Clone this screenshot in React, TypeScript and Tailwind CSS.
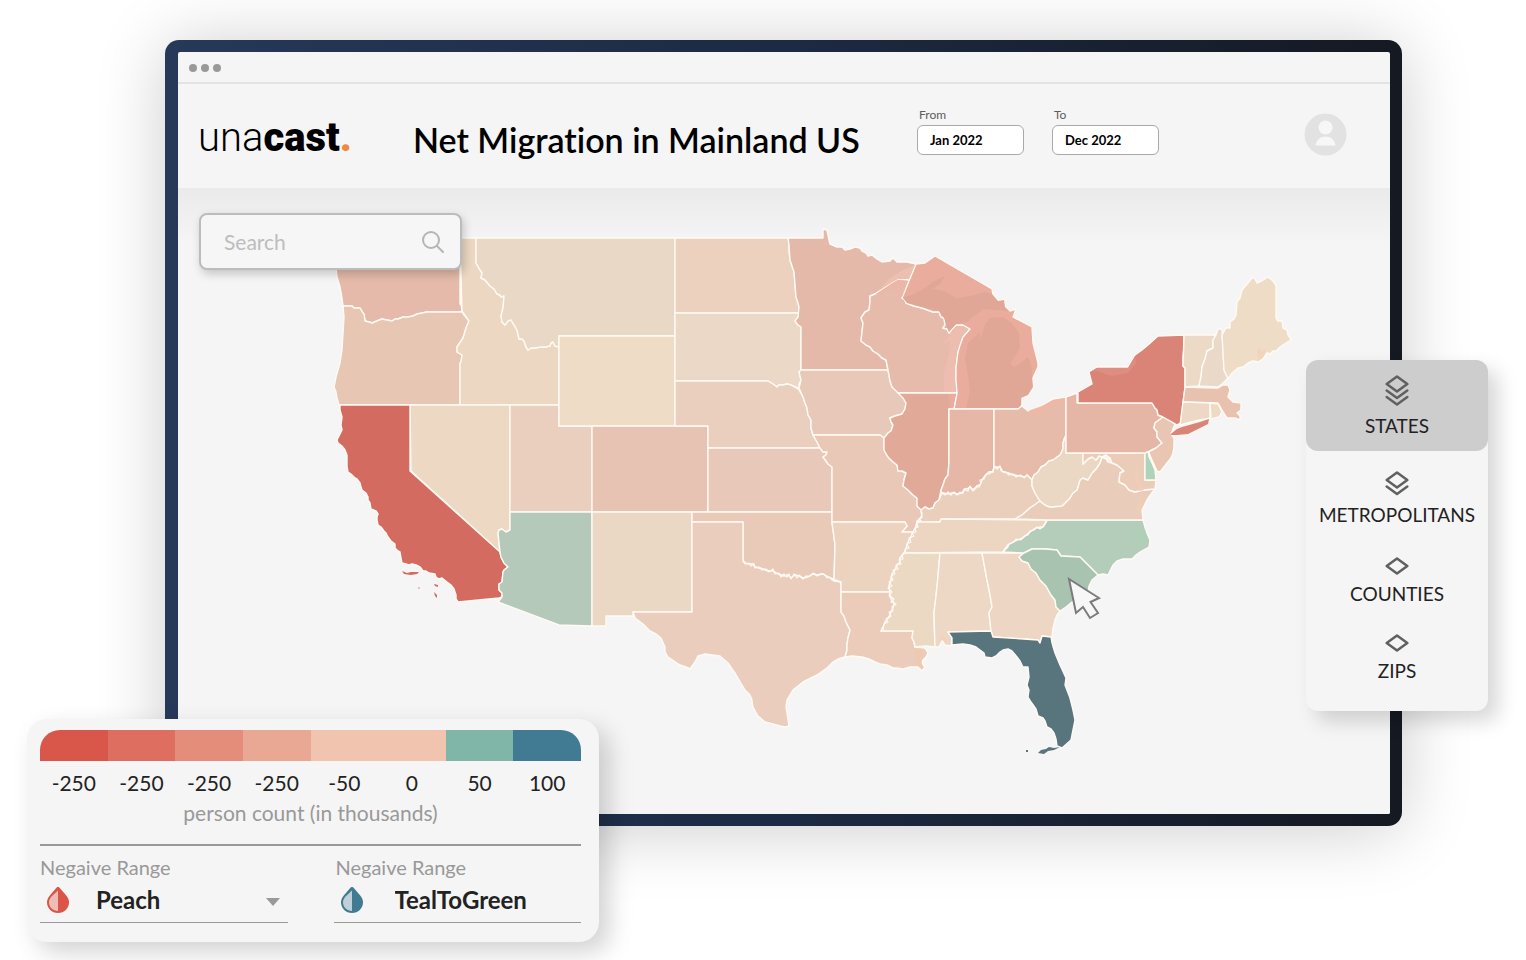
import React from "react";

type Region = { id: string; fill: string; points: string };

const REGIONS: Region[] = [
  { id: "WA", fill: "#e5baaa", points: "334,240 460,238 460,304 461,305 462,311 460,312 427,312 422,313 417,314 413,316 408,317 403,317 398,319 395,319 392,321 387,320 382,319 377,321 372,323 369,322 365,321 364,314 363,313 360,308 354,308 352,306 343,306 342,298 340,287 337,277 336,268" },
  { id: "OR", fill: "#e7c6b4", points: "343,306 352,306 354,308 360,308 363,313 364,314 365,321 369,322 372,323 377,321 382,319 387,320 392,321 395,319 398,319 403,317 408,317 413,316 417,314 422,313 427,312 462,312 464,315 469,321 466,328 463,338 459,344 457,347 457,352 462,355 461,362 460,363 460,405 339,405 337,398 336,392 334,387 336,377 340,363 342,350 343,333 344,317" },
  { id: "ID", fill: "#ebd7c2", points: "460,238 476,238 476,263 480,270 482,273 481,278 485,280 490,286 494,289 497,294 500,295 501,297 504,296 503,308 501,316 502,322 505,325 508,321 511,320 514,325 517,330 519,339 522,339 524,341 526,347 528,350 531,348 535,348 541,347 545,347 550,346 551,343 553,342 555,346 559,347 559,405 460,405 460,363 461,362 462,355 457,352 457,347 459,344 463,338 466,328 469,321 462,311" },
  { id: "MT", fill: "#ead8c6", points: "476,238 675,238 675,336 559,336 559,347 555,346 553,342 551,343 550,346 545,347 541,347 535,348 531,348 528,350 526,347 524,341 522,339 519,339 517,330 514,325 511,320 508,321 505,325 502,322 501,316 503,308 504,296 501,297 500,295 497,294 494,289 490,286 485,280 481,278 482,273 480,270 476,263" },
  { id: "NV", fill: "#ecd8c3", points: "410,405 510,405 510,530 508,531 506,532 502,529 499,530 498,533 500,552 411,471" },
  { id: "UT", fill: "#eacfbf", points: "510,405 559,405 559,426 592,426 592,512 510,512" },
  { id: "WY", fill: "#eedcc6", points: "559,336 675,336 675,426 559,426" },
  { id: "CO", fill: "#e7c3b4", points: "592,426 708,426 708,512 592,512" },
  { id: "CA", fill: "#d46b60", points: "340,405 410,405 410,471 500,552 501,557 504,563 508,567 504,570 503,572 502,582 499,584 499,590 502,593 502,597 499,598 458,602 456,599 456,595 455,592 454,589 451,585 447,582 442,578 439,579 437,578 436,577 435,574 429,573 426,571 423,571 421,568 420,567 416,565 412,564 409,565 406,564 402,563 401,558 400,552 398,551 396,549 395,548 395,544 391,541 388,537 386,533 384,531 381,527 378,525 377,520 377,517 378,514 376,511 371,509 370,503 368,500 368,497 366,493 362,490 361,487 360,483 357,479 355,478 351,474 348,472 347,466 347,460 347,455 345,450 342,446 338,443 337,440 340,434 342,430 341,425 342,417 340,410" },
  { id: "AZ", fill: "#b4c9b9", points: "510,512 592,512 592,626 559,625 498,602 502,597 502,593 499,590 499,584 502,582 503,572 504,570 508,567 504,563 501,557 500,552 498,533 499,530 502,529 506,532 508,531 510,530" },
  { id: "NM", fill: "#ead8c5", points: "592,512 692,512 692,612 633,612 633,616 606,616 606,626 592,626" },
  { id: "ND", fill: "#ecd1be", points: "675,238 788,238 789,245 789,252 790,260 792,266 794,272 795,284 796,297 798,303 799,307 799,313 675,313" },
  { id: "SD", fill: "#ecd8c7", points: "675,313 799,313 798,317 795,321 798,325 801,327 801,370 799,372 801,380 799,384 799,388 795,387 791,385 787,384 783,385 779,385 777,387 773,384 768,381 675,381" },
  { id: "NE", fill: "#eacfbf", points: "675,381 768,381 773,384 777,387 779,385 783,385 787,384 791,385 795,387 799,390 803,397 805,403 807,408 808,415 811,420 811,428 813,435 817,442 820,448 708,448 708,426 675,426" },
  { id: "KS", fill: "#e8c8b8", points: "708,448 820,448 823,452 827,452 826,455 823,457 826,461 828,464 832,467 832,512 708,512" },
  { id: "OK", fill: "#e9cab9", points: "692,512 832,512 832,523 835,545 834,579 830,578 823,574 818,575 813,574 808,577 803,578 799,576 795,575 791,578 788,575 784,576 778,574 773,571 768,571 763,569 759,568 755,567 753,564 747,564 743,561 743,522 692,522" },
  { id: "TX", fill: "#ebcdbd", points: "692,522 743,522 743,561 747,564 753,564 755,567 759,568 763,569 768,571 773,571 778,574 784,576 788,575 791,578 795,575 799,576 803,578 808,577 813,574 818,575 823,574 830,578 834,581 841,582 841,612 844,616 846,622 850,630 848,638 847,644 847,650 845,657 838,659 833,662 827,668 817,675 803,682 793,690 787,700 786,707 787,713 789,726 785,727 780,726 773,724 765,722 758,716 753,707 752,700 750,695 745,690 742,685 739,680 735,673 732,669 728,663 720,656 712,655 705,654 698,656 695,662 690,669 686,667 680,665 674,661 668,657 665,652 665,647 661,638 656,634 650,631 643,624 635,618 633,612 692,612" },
  { id: "MN", fill: "#e5b9a9", points: "788,238 823,238 823,229 827,230 829,240 830,244 837,247 842,247 845,250 850,249 855,247 860,248 862,251 866,253 868,256 872,255 877,259 882,262 890,261 893,258 897,262 907,262 916,264 909,280 898,279 891,283 875,294 870,296 870,302 869,310 865,312 861,318 863,323 862,332 861,341 866,345 870,347 873,351 878,354 882,358 886,360 888,370 801,370 801,327 798,325 795,321 798,317 799,307 798,303 796,297 795,284 794,272 792,266 790,260 789,245" },
  { id: "IA", fill: "#e8c9b9", points: "801,370 888,370 889,375 890,381 892,387 898,392 903,398 906,403 905,409 902,414 895,416 890,418 891,422 893,425 891,431 888,433 884,438 880,435 813,435 811,428 811,420 808,415 807,408 805,403 803,397 799,388 801,380 799,372" },
  { id: "MO", fill: "#e9c8b8", points: "813,435 880,435 884,438 884,444 884,450 888,457 892,461 897,465 898,471 902,471 906,473 904,480 903,486 908,490 913,495 917,498 917,506 921,510 922,517 917,521 916,527 913,532 902,532 907,526 905,522 832,522 832,467 828,464 826,461 823,457 826,455 827,452 823,452 820,448 817,442" },
  { id: "AR", fill: "#ecd3c0", points: "832,522 905,522 907,526 902,532 913,532 911,537 909,540 907,545 906,549 904,553 900,558 900,562 897,565 895,570 892,574 891,580 889,586 890,592 841,592 841,582 834,580 835,545" },
  { id: "LA", fill: "#ebccba", points: "841,592 890,592 890,597 894,603 893,608 891,612 889,617 885,622 883,627 881,631 913,631 912,638 914,642 915,647 925,648 928,653 926,657 923,660 922,664 925,667 922,671 918,667 910,667 903,669 897,668 893,668 887,665 880,664 875,662 869,659 862,657 852,656 845,657 847,650 847,644 848,638 850,630 846,622 844,616 841,612" },
  { id: "WI", fill: "#e6bbab", points: "909,280 902,298 905,300 906,303 914,306 922,308 933,312 939,312 941,317 944,318 945,325 943,328 947,329 949,333 952,329 956,325 963,325 970,329 963,337 960,345 958,352 956,367 956,380 957,393 898,393 892,387 890,381 889,375 888,370 886,360 882,358 878,354 873,351 870,347 866,345 861,341 862,332 863,323 861,318 865,312 869,310 870,302 870,296 875,294 891,283 898,279" },
  { id: "IL", fill: "#e0a998", points: "898,393 957,393 954,409 949,409 949,462 948,475 945,479 943,485 941,490 940,495 939,500 935,503 933,508 929,509 925,507 921,510 917,506 917,498 913,495 908,490 903,486 904,480 906,473 902,471 898,471 897,465 892,461 888,457 884,450 884,438 888,433 891,431 893,425 891,422 890,418 895,416 902,414 905,409 906,403 903,398" },
  { id: "MI", fill: "#e9ac9d", points: "916,264 925,263 935,256 992,289 993,295 998,301 1004,300 1005,307 1010,311 1016,309 1013,317 1032,327 1033,343 1038,363 1038,367 1032,380 1033,387 1028,395 1022,398 1022,405 1018,409 954,409 957,393 956,380 956,367 958,352 960,345 963,337 970,329 963,325 956,325 952,329 949,333 947,329 943,328 945,325 944,318 941,317 939,312 933,312 922,308 914,306 906,303 905,300 902,298" },
  { id: "IN", fill: "#e6b7a7", points: "949,409 994,409 994,467 993,472 989,472 985,476 982,480 980,485 977,486 973,490 970,487 967,489 965,489 962,493 958,494 953,493 948,494 942,493 941,490 943,485 945,479 948,475 949,462" },
  { id: "OH", fill: "#e7bba9", points: "994,409 1018,409 1022,406 1028,411 1033,411 1042,406 1053,399 1066,397 1066,435 1064,439 1063,443 1063,449 1060,455 1053,460 1049,461 1045,465 1041,467 1038,472 1034,475 1032,480 1027,475 1025,477 1020,476 1013,475 1008,473 1003,472 1000,467 997,468 994,467" },
  { id: "KY", fill: "#eacfbd", points: "942,493 948,494 953,493 958,494 962,493 965,489 967,489 970,487 973,490 977,486 980,485 982,480 985,476 989,472 993,472 994,467 1000,467 1003,472 1008,473 1013,475 1020,476 1025,477 1027,475 1032,480 1032,486 1035,493 1040,501 1035,505 1030,508 1022,515 1015,519 941,519 940,522 917,522 922,517 921,510 925,507 929,509 933,508 935,503 939,500" },
  { id: "TN", fill: "#ecd5c1", points: "917,522 940,522 941,519 1047,520 1043,527 1036,528 1030,532 1023,538 1015,541 1008,545 1003,552 904,553 906,549 907,545 909,540 911,537 913,532 916,527" },
  { id: "MS", fill: "#ecd9c4", points: "904,553 940,553 937,587 934,613 935,647 925,646 915,647 914,642 912,638 913,631 881,631 883,627 885,622 889,617 891,612 893,608 894,603 890,597 890,592 889,586 891,580 892,574 895,570 897,565 900,562 900,558" },
  { id: "AL", fill: "#ecd8c4", points: "940,553 982,553 987,580 990,595 992,607 989,613 990,622 991,631 948,632 952,638 951,646 945,645 942,640 939,647 935,647 934,613 937,587" },
  { id: "GA", fill: "#edd6c3", points: "982,553 1024,553 1019,557 1022,561 1028,563 1031,569 1036,573 1040,580 1046,586 1051,595 1055,600 1056,607 1060,611 1057,615 1055,620 1053,628 1052,637 1042,636 1040,643 1038,640 993,637 991,631 990,622 989,613 992,607 990,595 987,580" },
  { id: "FL", fill: "#58747c", points: "948,632 991,631 993,637 1038,640 1040,643 1042,636 1051,637 1052,643 1055,653 1060,665 1066,678 1065,685 1070,698 1073,710 1075,720 1073,730 1071,740 1062,748 1057,746 1056,739 1054,733 1051,729 1047,727 1045,721 1043,718 1038,716 1036,709 1031,702 1028,697 1029,690 1027,685 1029,677 1028,667 1023,667 1020,661 1017,657 1012,651 1008,649 1003,650 1000,652 996,656 992,658 985,657 984,653 980,650 976,647 970,645 963,644 952,645 952,638" },
  { id: "NC", fill: "#b4ccba", points: "1047,520 1143,520 1146,531 1150,540 1149,547 1140,552 1136,555 1132,559 1123,559 1117,561 1113,565 1110,571 1108,575 1103,574 1098,575 1080,557 1061,556 1057,550 1045,549 1032,549 1024,553 1003,552 1008,545 1015,541 1023,538 1030,532 1036,528 1043,527" },
  { id: "SC", fill: "#a9c3b1", points: "1019,557 1024,553 1032,549 1045,549 1057,550 1061,556 1080,557 1098,575 1092,580 1089,586 1088,592 1079,597 1072,602 1066,607 1060,611 1056,607 1055,600 1051,595 1046,586 1040,580 1036,573 1031,569 1028,563 1022,561" },
  { id: "VA", fill: "#e9ccba", points: "1015,519 1022,515 1030,508 1040,501 1045,505 1050,507 1062,506 1066,502 1070,498 1073,493 1077,490 1080,480 1083,478 1088,480 1092,473 1096,469 1100,463 1102,457 1106,459 1108,462 1112,463 1117,465 1124,471 1120,473 1119,482 1125,485 1129,490 1135,492 1143,490 1155,489 1151,494 1147,500 1142,510 1143,520 1047,520" },
  { id: "WV", fill: "#ead8c4", points: "1066,435 1066,453 1083,453 1083,464 1088,459 1092,457 1096,460 1099,456 1102,457 1100,463 1096,469 1092,473 1088,480 1083,478 1080,480 1077,490 1073,493 1070,498 1066,502 1062,506 1050,507 1045,505 1040,501 1035,493 1032,486 1032,480 1034,475 1038,472 1041,467 1045,465 1049,461 1053,460 1060,455 1063,449 1063,443" },
  { id: "MD", fill: "#ebccb9", points: "1083,453 1145,453 1145,480 1156,480 1155,489 1143,490 1135,492 1129,490 1125,485 1119,482 1120,473 1124,471 1117,465 1112,463 1110,458 1106,455 1102,457 1099,456 1096,460 1092,457 1088,459 1083,464" },
  { id: "DE", fill: "#aed3ba", points: "1145,453 1148,451 1149,457 1152,463 1155,470 1156,480 1145,480" },
  { id: "PA", fill: "#e5b6a6", points: "1066,397 1077,393 1077,403 1152,403 1155,408 1157,410 1158,415 1163,417 1155,423 1154,428 1157,432 1157,437 1162,443 1156,448 1150,451 1145,453 1066,453" },
  { id: "NJ", fill: "#e9c5b3", points: "1163,417 1175,424 1171,434 1174,438 1174,446 1173,453 1171,458 1167,463 1160,472 1157,471 1152,460 1149,453 1150,451 1156,448 1162,443 1157,437 1157,432 1154,428 1155,423" },
  { id: "NY", fill: "#da8377", points: "1078,403 1078,392 1092,384 1089,372 1097,367 1128,367 1135,355 1142,350 1148,345 1158,336 1184,335 1184,346 1183,357 1183,366 1185,368 1185,388 1183,403 1181,423 1177,425 1172,422 1163,417 1158,415 1157,410 1155,408 1152,403" },
  { id: "VT", fill: "#ecdac6", points: "1184,335 1216,335 1213,340 1213,348 1207,351 1205,359 1202,367 1201,377 1199,386 1185,387 1185,368 1183,366" },
  { id: "NH", fill: "#ead8c8", points: "1216,335 1218,329 1222,329 1224,370 1228,378 1222,384 1218,387 1199,386 1201,377 1202,367 1205,359 1207,351 1213,348 1213,340" },
  { id: "ME", fill: "#eedcc6", points: "1222,335 1226,328 1230,328 1230,322 1234,319 1236,315 1237,302 1240,298 1242,290 1248,283 1253,277 1255,279 1257,283 1263,280 1268,277 1273,281 1276,286 1276,318 1278,321 1282,321 1283,328 1287,330 1288,335 1291,340 1286,343 1280,347 1276,351 1273,351 1270,354 1267,353 1263,359 1258,362 1253,361 1248,363 1243,367 1238,368 1232,373 1228,379 1224,370" },
  { id: "MA", fill: "#e8c2ae", points: "1185,387 1218,388 1223,385 1228,385 1230,390 1228,397 1233,402 1241,403 1241,410 1237,413 1240,416 1240,420 1235,418 1227,418 1222,410 1218,403 1183,402" },
  { id: "CT", fill: "#ecd8c4", points: "1183,402 1210,403 1210,418 1195,421 1180,425" },
  { id: "RI", fill: "#eddac4", points: "1210,403 1218,404 1222,412 1219,417 1211,419" },
];

const ISLANDS: Region[] = [
  { id: "channel", fill: "#d46b60", points: "402,571 407,573 411,572 419,572 417,574 411,575 404,574" },
  { id: "san-nicolas", fill: "#d46b60", points: "418,587 420,588 419,589" },
  { id: "catalina", fill: "#d46b60", points: "434,584 438,585 438,587 435,586" },
  { id: "san-clemente", fill: "#d46b60", points: "434,592 437,595 437,598 435,596" },
  { id: "long-island", fill: "#da8377", points: "1170,435 1172,433 1177,429 1182,427 1200,422 1209,419 1208,424 1200,428 1188,434 1177,435" },
  { id: "keys", fill: "#58747c", points: "1038,753 1041,750 1046,749 1049,747 1054,748 1060,747 1054,750 1048,751 1044,754" },
  { id: "tortugas", fill: "#58747c", points: "1026,750 1028,750 1028,752 1026,752" },
];

const WATER: Region[] = [
  { id: "superior-mn", fill: "#edbfb0", points: "915,265 903,270 890,278 877,292 891,283 898,279 909,279" },
  { id: "superior-wi", fill: "#ebb7a8", points: "908,281 898,280 876,294 884,292 893,288 899,296 902,297" },
  { id: "michigan-wi", fill: "#edbeaf", points: "953,330 957,326 963,326 968,329 962,337 957,352 955,367 955,380 956,392 944,392 944,372 949,355 950,340 942,345" },
  { id: "michigan-il", fill: "#e9ac9d", points: "948,394 956,394 953,408 950,408" },
  { id: "up-land", fill: "#e0a797", points: "903,298 914,294 925,288 934,281 945,276 940,284 932,289 944,291 957,298 970,296 985,292 992,294 998,301 1004,300 1005,307 1009,311 995,310 985,309 975,315 967,322 956,324 949,332 944,318 939,311 922,307 907,303" },
  { id: "lower-land", fill: "#e0a797", points: "966,408 970,392 968,375 965,360 968,343 977,335 983,327 990,318 1003,317 1012,323 1019,333 1020,348 1010,364 1015,367 1028,357 1031,364 1033,387 1028,395 1021,398 1021,405 1018,408" },
  { id: "straits", fill: "#e9ac9d", points: "975,318 983,309 988,313 984,327 981,339 978,328" },
  { id: "erie", fill: "#edb9a5", points: "1023,407 1028,411 1042,406 1053,400 1065,398 1065,401 1050,408 1035,416" },
  { id: "ontario", fill: "#de8d80", points: "1090,372 1097,368 1128,368 1135,356 1136,364 1128,373 1112,376 1096,371" },
  { id: "chesapeake", fill: "#f0cdb4", points: "1139,459 1136,466 1134,477 1137,486 1139,491 1144,490 1139,480 1137,470" },
  { id: "james", fill: "#f0cdb4", points: "1137,494 1141,498 1139,506 1134,510 1141,511 1143,502" },
  { id: "pamlico", fill: "#aed0b6", points: "1128,532 1145,529 1148,541 1139,545 1131,551 1140,541" },
  { id: "penobscot", fill: "#f2d4bd", points: "1257,350 1260,348 1262,352 1266,348 1264,356 1258,361" },
  { id: "delta", fill: "#efc8b0", points: "915,652 921,648 924,655 919,658 923,666 917,664" },
  { id: "mobile", fill: "#f2d2bb", points: "942,634 945,640 950,645 942,640 938,646" },
];

const RIVERS = [
  "922,512 921,517 919,519 921,521 917,523 918,527 915,528 916,532 912,533 914,536 909,538 911,542 907,544 909,548 905,549 906,553 902,555 903,559 899,560 901,564 896,565 898,569 893,570 895,574 891,576 893,580 889,582 892,586 888,588 892,592 889,595 894,599 891,602 896,604 892,607 893,611 889,612 891,616 886,619 888,622 884,624 883,630",
  "743,561 745,564 749,563 751,566 754,564 755,568 759,567 762,570 766,569 769,572 773,569 775,574 779,573 781,577 784,574 787,577 789,574 791,579 794,574 797,578 799,575 803,579 806,576 810,576 813,573 817,576 820,574 824,574 827,578 830,577 832,580 836,580 841,582",
  "942,493 945,495 948,492 951,495 954,492 957,495 960,492 963,493 964,489 968,491 970,486 973,491 977,487 979,487 981,483 980,480 984,479 986,474 989,474 993,471 994,466 997,469 1000,466 1001,471 1006,472 1009,475 1013,474 1016,477 1020,475 1025,478",
  "1003,552 1008,547 1009,544 1014,542 1016,539 1021,540 1024,536 1028,535 1030,531 1034,530 1037,527 1040,529 1044,526 1047,521",
];

function MigrationMap() {
  return (
    <svg viewBox="178 188 1212 626" className="block w-full" role="img" aria-label="Map of net migration by state">
      <g stroke="#fffaf3" strokeWidth="1.400" strokeLinejoin="round">
        {REGIONS.map((r) => (
          <polygon key={r.id} points={r.points} fill={r.fill} />
        ))}
      </g>
      {WATER.map((r) => (
        <polygon key={r.id} points={r.points} fill={r.fill} />
      ))}
      {ISLANDS.map((r) => (
        <polygon key={r.id} points={r.points} fill={r.fill} />
      ))}
      <g stroke="#fffaf3" strokeWidth="1.200" fill="none" strokeLinejoin="round">
        {RIVERS.map((points) => (
          <polyline key={points} points={points} />
        ))}
      </g>
      <path
        d="M1069 579 1099 598 1090.500 602 1098 613 1090 618 1083 607 1076 613Z"
        fill="#f7f7f7"
        stroke="#7b7b7b"
        strokeWidth="2"
      />
    </svg>
  );
}

function DateField({ id, label, value }: { id: string; label: string; value: string }) {
  return (
    <div className="flex w-[107px] flex-col">
      <label htmlFor={id} className="pl-0.5 text-[12px] leading-5 text-[#5c5c5c]">
        {label}
      </label>
      <input
        id={id}
        defaultValue={value}
        className="h-[30px] w-full rounded-md border border-[#a9a9a9] bg-white px-3 text-[13px] font-bold text-black"
      />
    </div>
  );
}

function LayersIcon({ layers }: { layers: number }) {
  const height = 18 + (layers - 1) * 7;
  return (
    <svg width="24" height={height} viewBox={`0 0 24 ${height}`} fill="none" stroke="#606060" strokeWidth="2.500" strokeLinejoin="round" strokeLinecap="round" aria-hidden="true">
      <path d="M12 1.500 22.300 9 12 16.500 1.700 9Z" />
      {layers > 1 && <path d="M1.700 15.500 12 23 22.300 15.500" />}
      {layers > 2 && <path d="M1.700 22 12 29.500 22.300 22" />}
    </svg>
  );
}

function DropIcon({ color, tint }: { color: string; tint: string }) {
  return (
    <svg width="24" height="28" viewBox="0 0 24 28" className="shrink-0" aria-hidden="true">
      <path d="M12 1C12.800 1 13.300 1.500 14 2.300L20 9.200C22 11.600 23 13.600 23 16.200 23 22.300 18.200 27 12 27S1 22.300 1 16.200C1 13.600 2 11.600 4 9.200L10 2.300C10.700 1.500 11.200 1 12 1Z" fill={color} />
      <path d="M12 4.500V25C7 25 3 21 3 16.200 3 14.200 3.800 12.600 5.500 10.500Z" fill={tint} />
    </svg>
  );
}

const LEVELS = [
  { label: "STATES", layers: 3 },
  { label: "METROPOLITANS", layers: 2 },
  { label: "COUNTIES", layers: 1 },
  { label: "ZIPS", layers: 1 },
];

const LEVEL_STYLES = [
  "h-[91px] rounded-xl bg-[#cdcdcd] pb-[13px]",
  "h-[76px]",
  "h-[79px]",
  "h-[77px]",
];

function LevelPanel() {
  return (
    <nav
      aria-label="Map level"
      className="absolute top-80 -right-[86px] flex h-[351px] w-[182px] flex-col rounded-xl bg-[#f5f5f5] shadow-[10px_10px_20px_rgba(0,0,0,0.16)]"
    >
      {LEVELS.map((level, i) => (
        <button
          key={level.label}
          type="button"
          aria-pressed={i === 0}
          className={`flex w-full flex-col items-center justify-end gap-[7px] text-[19px] leading-6 text-[#222] ${LEVEL_STYLES[i]}`}
        >
          <LayersIcon layers={level.layers} />
          {level.label}
        </button>
      ))}
    </nav>
  );
}

const SCALE = [
  { value: "-250", color: "bg-[#d9564a]" },
  { value: "-250", color: "bg-[#de6e60]" },
  { value: "-250", color: "bg-[#e48d7a]" },
  { value: "-250", color: "bg-[#e9a893]" },
  { value: "-50", color: "bg-[#f0c4af]" },
  { value: "0", color: "bg-[#f0c4af]" },
  { value: "50", color: "bg-[#80b6a8]" },
  { value: "100", color: "bg-[#407a93]" },
];

function Legend() {
  return (
    <section
      aria-label="Legend"
      className="absolute -bottom-[116px] -left-[138px] w-[572px] rounded-[20px] bg-[#f5f5f5] pt-[11px] pr-[18px] pb-[19px] pl-[13px] shadow-[10px_10px_24px_rgba(0,0,0,0.18)]"
    >
      <div className="grid h-[31px] grid-cols-8 overflow-hidden rounded-t-[20px]">
        {SCALE.map((s, i) => (
          <div key={i} className={s.color} />
        ))}
      </div>
      <div className="mt-1.5 grid grid-cols-8 text-center text-[21px] leading-8 text-[#222]">
        {SCALE.map((s, i) => (
          <span key={i}>{s.value}</span>
        ))}
      </div>
      <p className="border-b-2 border-[#999] pb-[17px] text-center text-[21px] leading-7 text-[#999]">
        person count (in thousands)
      </p>
      <div className="mt-[7px] grid grid-cols-2 gap-[46px]">
        <div className="border-b border-[#999]">
          <label htmlFor="negative" className="block text-[20px] leading-7 text-[#999]">
            Negaive Range
          </label>
          <div className="flex h-[41px] items-center pb-1 pl-[6px]">
            <DropIcon color="#da5548" tint="#edbdb6" />
            <select id="negative" className="ml-[26px] min-w-0 flex-1 appearance-none bg-transparent text-[24px] font-bold text-[#222]">
              <option>Peach</option>
            </select>
            <svg width="14" height="8" viewBox="0 0 14 8" className="pointer-events-none mt-1 mr-2 shrink-0" aria-hidden="true">
              <path d="M0 0H14L7 8Z" fill="#999" />
            </svg>
          </div>
        </div>
        <div className="border-b border-[#999]">
          <label htmlFor="positive" className="block pl-[2px] text-[20px] leading-7 text-[#999]">
            Negaive Range
          </label>
          <div className="flex h-[41px] items-center pb-1 pl-[6px]">
            <DropIcon color="#407a93" tint="#bfd0d8" />
            <select id="positive" className="ml-[31px] min-w-0 flex-1 appearance-none bg-transparent text-[24px] font-bold text-[#222]">
              <option>TealToGreen</option>
            </select>
          </div>
        </div>
      </div>
    </section>
  );
}

export default function App() {
  return (
    <div className="min-h-screen overflow-hidden bg-white pt-10 pr-[124px] pb-[134px] pl-[165px] font-['Lato',sans-serif] [font-variant-ligatures:none]">
      <div className="relative rounded-[14px] bg-linear-to-r from-[#263959] via-[#1c2a43] to-[#151922] p-3 pl-[13px] shadow-[0_4px_70px_rgba(0,0,0,0.2)]">
        <div className="overflow-hidden rounded-xs bg-[#f5f5f5]">
          <div className="flex h-8 items-center gap-1 border-b-2 border-[#e3e3e3] pt-0.5 pl-[11px]">
            <span className="size-[8px] rounded-full bg-[#999]" />
            <span className="size-[8px] rounded-full bg-[#999]" />
            <span className="size-[8px] rounded-full bg-[#999]" />
          </div>
          <header className="flex h-[104px] items-center pr-[43px] pl-5">
            <a href="#" className="w-[215px] shrink-0 pt-1 font-['Roboto',sans-serif] text-[40px] leading-none text-black">
              <span className="font-light">una</span>
              <span className="font-black">cast</span>
              <span className="font-black text-[#f08a3c]">.</span>
            </a>
            <h1 className="w-[504px] shrink-0 pt-2 text-[34px] leading-10 font-semibold whitespace-nowrap text-black">
              Net Migration in Mainland US
            </h1>
            <div className="flex gap-7 pb-3">
              <DateField id="from" label="From" value="Jan 2022" />
              <DateField id="to" label="To" value="Dec 2022" />
            </div>
            <button type="button" aria-label="Account" className="ml-auto pb-1">
              <svg width="43" height="43" viewBox="0 0 43 43" aria-hidden="true">
                <circle cx="21.500" cy="21.500" r="21" fill="#e2e2e2" />
                <circle cx="21.500" cy="14.500" r="7" fill="#f7f7f7" />
                <path d="M11.500 32.500C12.500 26.500 16.500 23.500 21.500 23.500S30.500 26.500 31.500 32.500Z" fill="#f7f7f7" />
              </svg>
            </button>
          </header>
          <main className="relative bg-[linear-gradient(to_bottom,#eaeaea,#f5f5f5_56px)]">
            <MigrationMap />
            <div className="absolute top-[25px] left-[21px] flex h-[57px] w-[263px] items-center rounded-lg border-2 border-[#bcbcbc] bg-[#f6f6f6] pr-4 pl-[23px] shadow-[2px_4px_10px_rgba(0,0,0,0.2)]">
              <input
                type="search"
                aria-label="Search"
                placeholder="Search"
                className="min-w-0 flex-1 bg-transparent text-[21px] placeholder:text-[#bdbdbd]"
              />
              <svg width="22" height="22" viewBox="0 0 22 22" fill="none" stroke="#b5b5b5" strokeWidth="2" strokeLinecap="round" aria-hidden="true">
                <circle cx="9" cy="9" r="8" />
                <path d="M15 15 21 21" />
              </svg>
            </div>
          </main>
        </div>
        <LevelPanel />
        <Legend />
      </div>
    </div>
  );
}
